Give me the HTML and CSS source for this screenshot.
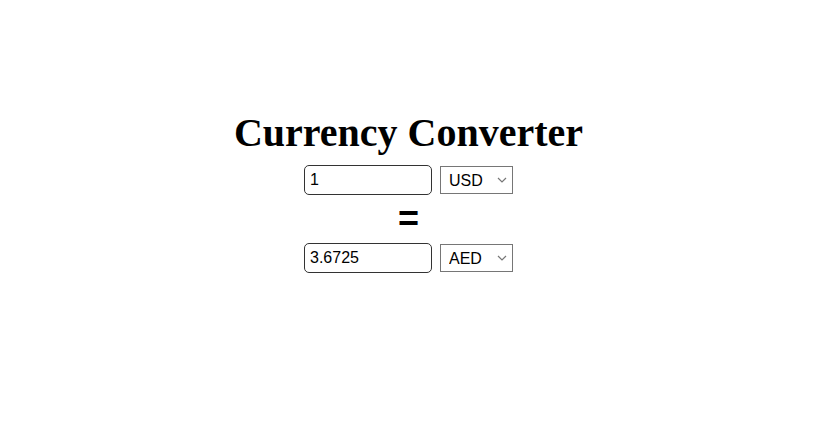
FILE: index.html
```html
<!DOCTYPE html>
<html>
<head>
<meta charset="utf-8">
<link rel="stylesheet" href="styles.css">
</head>
<body>
<div class="app">
  <h1 class="title">Currency Converter</h1>
  <div class="row">
    <input class="amount" type="text" value="1">
    <select class="currency"><option>USD</option></select>
  </div>
  <div class="equals">=</div>
  <div class="row">
    <input class="amount" type="text" value="3.6725">
    <select class="currency"><option>AED</option></select>
  </div>
</div>
</body>
</html>
```
FILE: styles.css
```css
html, body { margin: 0; padding: 0; background: #fff; }
.app {
  display: flex;
  flex-direction: column;
  align-items: center;
  padding-top: 110px;
  padding-right: 11px;
  font-family: "Liberation Sans", Arial, sans-serif;
}
.title {
  font-family: "Liberation Serif", "Times New Roman", serif;
  font-weight: bold;
  font-size: 40px;
  margin: 0 0 9px 0;
  line-height: 46px;
}
.row {
  display: flex;
  gap: 8px;
  align-items: center;
}
.amount {
  width: 128px;
  height: 30px;
  box-sizing: border-box;
  border: 1px solid #333;
  border-radius: 5px;
  padding: 0 5px;
  font-family: "Liberation Sans", Arial, sans-serif;
  font-size: 16px;
  color: #000;
  outline: none;
}
.currency {
  -webkit-appearance: none;
  appearance: none;
  width: 73px;
  height: 28px;
  box-sizing: border-box;
  border: 1px solid #767676;
  border-radius: 0;
  font-family: "Liberation Sans", Arial, sans-serif;
  font-size: 16px;
  color: #000;
  padding: 0 0 0 8px;
  background-color: #fff;
  background-image: url("data:image/svg+xml,%3Csvg xmlns='http://www.w3.org/2000/svg' width='10' height='6' viewBox='0 0 10 6'%3E%3Cpath d='M1 1l4 4 4-4' fill='none' stroke='%23777' stroke-width='1.2'/%3E%3C/svg%3E");
  background-repeat: no-repeat;
  background-position: right 5px center;
}
.equals {
  font-size: 36px;
  font-weight: bold;
  line-height: 48px;
}
```
